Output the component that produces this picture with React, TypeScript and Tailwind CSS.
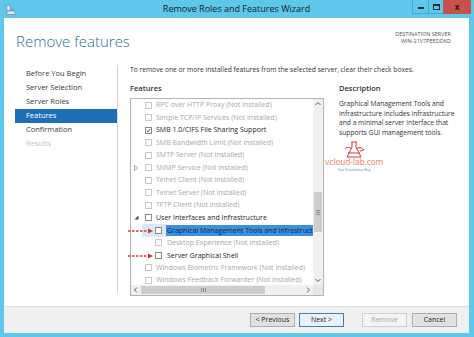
import React from "react";

type Row = {
  label: string;
  level: 1 | 2;
  disabled?: boolean;
  checked?: boolean;
  expander?: "closed" | "open";
  selected?: boolean;
};

const rows: Row[] = [
  { label: "RPC over HTTP Proxy (Not installed)", level: 1, disabled: true },
  { label: "Simple TCP/IP Services (Not installed)", level: 1, disabled: true },
  { label: "SMB 1.0/CIFS File Sharing Support", level: 1, checked: true },
  { label: "SMB Bandwidth Limit (Not installed)", level: 1, disabled: true },
  { label: "SMTP Server (Not installed)", level: 1, disabled: true },
  { label: "SNMP Service (Not installed)", level: 1, disabled: true, expander: "closed" },
  { label: "Telnet Client (Not installed)", level: 1, disabled: true },
  { label: "Telnet Server (Not installed)", level: 1, disabled: true },
  { label: "TFTP Client (Not installed)", level: 1, disabled: true },
  { label: "User Interfaces and Infrastructure", level: 1, expander: "open" },
  { label: "Graphical Management Tools and Infrastructure", level: 2, selected: true },
  { label: "Desktop Experience (Not installed)", level: 2, disabled: true },
  { label: "Server Graphical Shell", level: 2 },
  { label: "Windows Biometric Framework (Not installed)", level: 1, disabled: true },
  { label: "Windows Feedback Forwarder (Not installed)", level: 1, disabled: true },
];

function Checkbox({ disabled, checked }: { disabled?: boolean; checked?: boolean }) {
  return (
    <div
      className={`w-[7px] h-[7px] shrink-0 border bg-white flex items-center justify-center ${
        disabled ? "border-[#c9c9c9]" : "border-[#8a8a8a]"
      }`}
    >
      {checked && (
        <svg width="7" height="7" viewBox="0 0 7 7">
          <path d="M1 3.6 L2.8 5.3 L6 1.2" fill="none" stroke="#222" strokeWidth="1.1" />
        </svg>
      )}
    </div>
  );
}

function Expander({ kind }: { kind?: "closed" | "open" }) {
  return (
    <div className="w-[6px] h-[6px] shrink-0 flex items-center justify-center">
      {kind === "closed" && (
        <svg width="5" height="6" viewBox="0 0 5 6">
          <path d="M0.5 0.5 L4 3 L0.5 5.5 Z" fill="none" stroke="#9a9a9a" strokeWidth="0.8" />
        </svg>
      )}
      {kind === "open" && (
        <svg width="5" height="5" viewBox="0 0 5 5">
          <path d="M4.5 0.5 L4.5 4.5 L0.5 4.5 Z" fill="#444" />
        </svg>
      )}
    </div>
  );
}

function FeatureRow({ row }: { row: Row }) {
  const textColor = row.disabled ? "text-[#a8a8a8]" : "text-[#1e1e1e]";
  return (
    <div className="h-[12.5px] flex items-center whitespace-nowrap">
      <div className="w-[2px] shrink-0" />
      <Expander kind={row.expander} />
      {row.level === 2 ? (
        <div className="flex items-center h-full">
          <div className="w-[3px] shrink-0 h-full" />
          <div
            className={`flex items-center h-full pl-[13px] pr-[4px] ${
              row.selected ? "bg-[#d9e8f7]" : ""
            }`}
          >
            <Checkbox disabled={row.disabled} checked={row.checked} />
          </div>
          <span
            className={`leading-[11px] px-[1px] ${
              row.selected ? "bg-[#3d8fe0] text-[#0f2450]" : textColor
            }`}
          >
            {row.label}
          </span>
        </div>
      ) : (
        <div className="flex items-center">
          <div className="w-[6px] shrink-0" />
          <Checkbox disabled={row.disabled} checked={row.checked} />
          <span className={`ml-[4px] ${textColor}`}>{row.label}</span>
        </div>
      )}
    </div>
  );
}

function Chevron({ dir }: { dir: "up" | "down" | "left" | "right" }) {
  const d =
    dir === "up"
      ? "M1.5 5 L4 2.5 L6.5 5"
      : dir === "down"
      ? "M1.5 3 L4 5.5 L6.5 3"
      : dir === "left"
      ? "M5 1.5 L2.5 4 L5 6.5"
      : "M3 1.5 L5.5 4 L3 6.5";
  return (
    <svg width="8" height="8" viewBox="0 0 8 8">
      <path d={d} fill="none" stroke="#606060" strokeWidth="1" />
    </svg>
  );
}

function RedArrow() {
  return (
    <svg width="26" height="6" viewBox="0 0 26 6">
      <line x1="0" y1="3" x2="21" y2="3" stroke="#e0322c" strokeWidth="1.3" strokeDasharray="2.5 1.5" />
      <path d="M20 0.5 L25 3 L20 5.5 Z" fill="#e0322c" />
    </svg>
  );
}

function FeatureList() {
  return (
    <div className="relative w-[194px] h-[198px] border border-[#b4b4b4] bg-white flex flex-col">
      <div className="flex flex-1 min-h-0">
        <div className="flex-1 overflow-hidden">
          {rows.map((r) => (
            <FeatureRow key={r.label} row={r} />
          ))}
        </div>
        {/* vertical scrollbar */}
        <div className="w-[10px] bg-[#f0f0f0] flex flex-col items-center">
          <div className="h-[10px] flex items-center justify-center">
            <Chevron dir="up" />
          </div>
          <div className="flex-1 w-full flex flex-col">
            <div className="h-[83px]" />
            <div className="h-[40px] mx-[1px] bg-[#cdcdcd] flex items-center justify-center">
              <div className="w-[4px] flex flex-col gap-[1px]">
                <div className="h-px bg-[#8f8f8f]" />
                <div className="h-px bg-[#8f8f8f]" />
                <div className="h-px bg-[#8f8f8f]" />
              </div>
            </div>
          </div>
          <div className="h-[10px] flex items-center justify-center">
            <Chevron dir="down" />
          </div>
        </div>
      </div>
      {/* horizontal scrollbar */}
      <div className="h-[10px] flex">
        <div className="flex-1 bg-[#f0f0f0] flex items-center">
          <div className="w-[10px] flex items-center justify-center">
            <Chevron dir="left" />
          </div>
          <div className="w-[124px] h-[8px] bg-[#cdcdcd] flex items-center justify-center gap-[1px]">
            <div className="w-px h-[4px] bg-[#8f8f8f]" />
            <div className="w-px h-[4px] bg-[#8f8f8f]" />
            <div className="w-px h-[4px] bg-[#8f8f8f]" />
          </div>
          <div className="flex-1" />
          <div className="w-[10px] flex items-center justify-center">
            <Chevron dir="right" />
          </div>
        </div>
        <div className="w-[10px] bg-[#e6e6e6]" />
      </div>
      {/* red annotation arrows */}
      <div className="absolute left-[-3px] top-[129px]">
        <RedArrow />
      </div>
      <div className="absolute left-[-3px] top-[154px]">
        <RedArrow />
      </div>
    </div>
  );
}

function Logo() {
  return (
    <div className="flex flex-col items-center w-[66px] ml-[-18px] mt-[3px]">
      <svg width="24" height="20" viewBox="0 0 24 20">
        <path
          d="M9 1 L15 1 M10 1 L10 6 L5 16 L19 16 L14 6 L14 1 M3 8 C6 5 9 7 10 8 M14 8 C16 6 20 6 22 9 L18 10 M6 12 L18 12"
          fill="none"
          stroke="#d23a3a"
          strokeWidth="1"
        />
      </svg>
      <div className="text-[8px] leading-[8px] text-[#f08a6a] font-['DejaVu_Sans',sans-serif] tracking-[-0.2px] mt-[-2px]">
        vcloud-lab.com
      </div>
      <div className="text-[3px] leading-[4px] text-[#4a7fd0] mt-[1px]">Your Virtualization Blog</div>
    </div>
  );
}

function WizButton({ label, variant }: { label: string; variant?: "default" | "disabled" }) {
  const cls =
    variant === "default"
      ? "border-[#3c7fb1] bg-[#e5f1fb] text-[#1e1e1e]"
      : variant === "disabled"
      ? "border-[#cfcfcf] bg-[#f4f4f4] text-[#a8a8a8]"
      : "border-[#adadad] bg-[#e1e1e1] text-[#1e1e1e]";
  return (
    <div className={`h-[14px] w-[45px] border flex items-center justify-center text-[7px] ${cls}`}>
      {label}
    </div>
  );
}

export default function App() {
  const navItems = [
    { label: "Before You Begin" },
    { label: "Server Selection" },
    { label: "Server Roles" },
    { label: "Features", active: true },
    { label: "Confirmation" },
    { label: "Results", dim: true },
  ];
  return (
    <div className="w-[474px] h-[337px] bg-[#5ec8ec] flex flex-col overflow-hidden font-['Open_Sans',sans-serif] text-[#333]">
      {/* title bar */}
      <div className="h-[18px] flex items-start shrink-0">
        <div className="w-[16px] h-[16px] flex items-center justify-center ml-[3px] mt-[2px]">
          <svg width="10" height="10" viewBox="0 0 10 10">
            <rect x="1" y="0.5" width="3" height="5" fill="#e8f3fa" stroke="#7a8a96" strokeWidth="0.6" />
            <rect x="1" y="6" width="8" height="3.5" fill="#dfe9f0" stroke="#6c7c88" strokeWidth="0.6" />
            <path d="M5 4 L8 5" stroke="#6c7c88" strokeWidth="0.6" />
          </svg>
        </div>
        <div className="flex-1 h-[18px] flex items-center justify-center text-[9px] text-[#1a1a1a] pl-[42px]">
          Remove Roles and Features Wizard
        </div>
        <div className="flex h-[14px] mr-[3px]">
          <div className="w-[16px] h-full border-l border-b border-[#4aa6c6] bg-[#5ec8ec] flex items-center justify-center">
            <div className="w-[6px] h-[2px] bg-[#1c2a33] mt-[2px]" />
          </div>
          <div className="w-[15px] h-full border-l border-b border-[#4aa6c6] bg-[#5ec8ec] flex items-center justify-center">
            <div className="w-[7px] h-[6px] border border-[#1c2a33] border-t-2" />
          </div>
          <div className="w-[28px] h-full bg-[#c7504b] flex items-center justify-center text-[8px] font-bold text-[#2a1010] leading-none pb-[1px]">
            x
          </div>
        </div>
      </div>

      {/* window client area */}
      <div className="flex-1 ml-[4px] mr-[5px] mb-[4px] bg-white flex flex-col min-h-0">
        {/* header */}
        <div className="h-[45px] shrink-0 flex items-start">
          <div className="pl-[12px] pt-[14px] text-[15px] leading-[18px] font-light text-[#2b7196] flex-1">
            Remove features
          </div>
          <div className="pt-[13px] pr-[18px] flex flex-col items-end text-[5.5px] leading-[7px] text-[#555]">
            <div>DESTINATION SERVER</div>
            <div>WIN-21V7PEEDDKD</div>
          </div>
        </div>

        {/* body */}
        <div className="flex-1 flex min-h-0">
          {/* nav */}
          <div className="w-[114px] shrink-0 pl-[11px] pt-[4px] pb-[13px] flex">
            <div className="flex-1 flex flex-col text-[7.5px]">
              {navItems.map((n) => (
                <div
                  key={n.label}
                  className={`h-[14px] flex items-center pl-[11px] ${
                    n.active ? "bg-[#1d6fb8] text-white" : n.dim ? "text-[#c4c4c4]" : "text-[#3a3a3a]"
                  }`}
                >
                  {n.label}
                </div>
              ))}
            </div>
            <div className="w-px bg-[#d4d4d4] mt-[-2px]" />
          </div>

          {/* main */}
          <div className="flex-1 pl-[12px] pt-[2px] flex flex-col">
            <div className="h-[10px] leading-[10px] text-[6.7px] text-[#333] whitespace-nowrap">
              To remove one or more installed features from the selected server, clear their check boxes.
            </div>
            <div className="flex mt-[8px] gap-[15px]">
              <div className="flex flex-col">
                <div className="h-[10px] leading-[10px] text-[7.5px] font-semibold text-[#333]">Features</div>
                <div className="mt-[5px] text-[7px]">
                  <FeatureList />
                </div>
              </div>
              <div className="flex flex-col">
                <div className="h-[10px] leading-[10px] text-[7.5px] font-semibold text-[#333]">Description</div>
                <div className="mt-[6px] text-[6.7px] leading-[9.7px] text-[#333] whitespace-nowrap">
                  <div>Graphical Management Tools and</div>
                  <div>Infrastructure includes infrastructure</div>
                  <div>and a minimal server interface that</div>
                  <div>supports GUI management tools.</div>
                </div>
                <Logo />
              </div>
            </div>
          </div>
        </div>

        {/* footer */}
        <div className="h-[27px] shrink-0 bg-[#f0f0f0] border-t border-[#dcdcdc] flex items-start justify-end pt-[6px] pr-[12px]">
          <div className="flex">
            <WizButton label="< Previous" />
            <div className="w-[4px]" />
            <WizButton label="Next >" variant="default" />
            <div className="w-[18px]" />
            <WizButton label="Remove" variant="disabled" />
            <div className="w-[5px]" />
            <WizButton label="Cancel" />
          </div>
        </div>
      </div>
    </div>
  );
}
